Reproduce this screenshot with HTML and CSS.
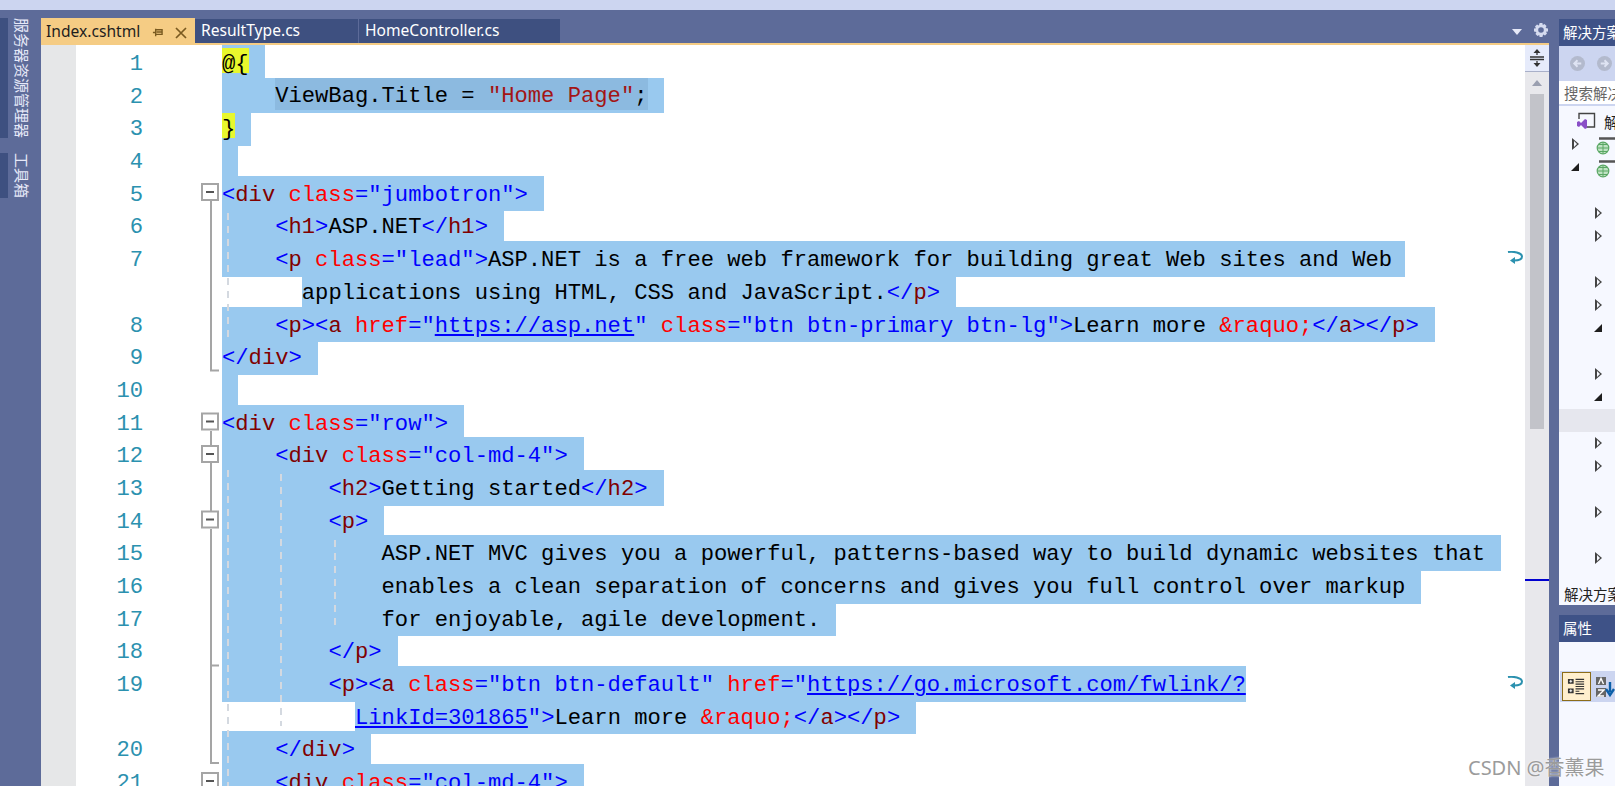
FILE: index.html
```html
<!DOCTYPE html>
<html lang="zh">
<head>
<meta charset="utf-8">
<title>Index.cshtml</title>
<link rel="stylesheet" href="styles.css">
</head>
<body>
<div class="topbar"></div>
<div class="main">
  <aside class="rail">
    <div class="railtab tall">服务器资源管理器</div>
    <div class="railtab">工具箱</div>
  </aside>
  <section class="center">
    <div class="tabstrip">
      <div class="tab active">
        <span class="tabname">Index.cshtml</span>
        <svg class="pin" viewBox="0 0 12 12"><path d="M1 6H4M4 2V10M4 3H11V8H4M11 5.500H5"/></svg>
        <svg class="close" viewBox="0 0 12 12"><path d="M1 1L11 11M11 1L1 11"/></svg>
      </div>
      <div class="tab t1">ResultType.cs</div>
      <div class="tab t2">HomeController.cs</div>
      <div class="stripicons">
        <svg class="drop" viewBox="0 0 10 6"><path d="M0 0H10L5 6Z"/></svg>
        <svg class="gear" viewBox="0 0 14 14"><path fill-rule="evenodd" d="M5.600 0H8.400L8.800 2L10.500 1L12.500 3L11.600 4.900L14 5.600V8.400L12 8.800L13 10.500L11 12.500L9.100 11.600L8.400 14H5.600L5.200 12L3.500 13L1.500 11L2.400 9.100L0 8.400V5.600L2 5.200L1 3.500L3 1.500L4.900 2.400ZM7 4.200A2.800 2.800 0 1 0 7 9.800A2.800 2.800 0 1 0 7 4.200Z"/></svg>
      </div>
    </div>
    <div class="editor">
      <div class="pane">
        <div class="glyphs"></div>
        <div class="lines">
          <div class="row"><span class="n">1</span><span class="code"><span class="y">@{</span></span></div>
          <div class="row"><span class="n">2</span><span class="code ext">    <span class="cs">ViewBag.Title = <span class="s">"Home Page"</span>;</span></span></div>
          <div class="row"><span class="n">3</span><span class="code ext"><span class="y">}</span></span></div>
          <div class="row"><span class="n">4</span><span class="code"></span></div>
          <div class="row"><span class="n">5</span><span class="code ext"><b>&lt;</b><i>div</i> <u>class</u><b>="jumbotron"&gt;</b></span></div>
          <div class="row"><span class="n">6</span><span class="code">    <b>&lt;</b><i>h1</i><b>&gt;</b>ASP.NET<b>&lt;/</b><i>h1</i><b>&gt;</b></span></div>
          <div class="row"><span class="n">7</span><span class="code ext nopad">    <b>&lt;</b><i>p</i> <u>class</u><b>="lead"&gt;</b>ASP.NET is a free web framework for building great Web sites and Web </span><svg class="wrapg" viewBox="0 0 16 14"><path class="wl" d="M1 1C6 0 15 2 15 5.500C15 9 11 9.500 7 9.500"/><path class="wh" d="M8 6L3 9.500L8 13Z"/></svg></div>
          <div class="row"><span class="n"></span><span class="code in6">applications using HTML, CSS and JavaScript.<b>&lt;/</b><i>p</i><b>&gt;</b></span></div>
          <div class="row"><span class="n">8</span><span class="code ext">    <b>&lt;</b><i>p</i><b>&gt;&lt;</b><i>a</i> <u>href</u><b>="<a class="link">https://asp.net</a>"</b> <u>class</u><b>="btn btn-primary btn-lg"&gt;</b>Learn more <u class="ent">&amp;raquo;</u><b>&lt;/</b><i>a</i><b>&gt;&lt;/</b><i>p</i><b>&gt;</b></span></div>
          <div class="row"><span class="n">9</span><span class="code ext"><b>&lt;/</b><i>div</i><b>&gt;</b></span></div>
          <div class="row"><span class="n">10</span><span class="code"></span></div>
          <div class="row"><span class="n">11</span><span class="code"><b>&lt;</b><i>div</i> <u>class</u><b>="row"&gt;</b></span></div>
          <div class="row"><span class="n">12</span><span class="code">    <b>&lt;</b><i>div</i> <u>class</u><b>="col-md-4"&gt;</b></span></div>
          <div class="row"><span class="n">13</span><span class="code ext">        <b>&lt;</b><i>h2</i><b>&gt;</b>Getting started<b>&lt;/</b><i>h2</i><b>&gt;</b></span></div>
          <div class="row"><span class="n">14</span><span class="code">        <b>&lt;</b><i>p</i><b>&gt;</b></span></div>
          <div class="row"><span class="n">15</span><span class="code ext">            ASP.NET MVC gives you a powerful, patterns-based way to build dynamic websites that</span></div>
          <div class="row"><span class="n">16</span><span class="code ext">            enables a clean separation of concerns and gives you full control over markup</span></div>
          <div class="row"><span class="n">17</span><span class="code ext">            for enjoyable, agile development.</span></div>
          <div class="row"><span class="n">18</span><span class="code">        <b>&lt;/</b><i>p</i><b>&gt;</b></span></div>
          <div class="row"><span class="n">19</span><span class="code ext nopad">        <b>&lt;</b><i>p</i><b>&gt;&lt;</b><i>a</i> <u>class</u><b>="btn btn-default"</b> <u>href</u><b>="<a class="link">https://go.microsoft.com/fwlink/?</a></b></span><svg class="wrapg" viewBox="0 0 16 14"><path class="wl" d="M1 1C6 0 15 2 15 5.500C15 9 11 9.500 7 9.500"/><path class="wh" d="M8 6L3 9.500L8 13Z"/></svg></div>
          <div class="row"><span class="n"></span><span class="code ext in10"><b><a class="link">LinkId=301865</a>"&gt;</b>Learn more <u class="ent">&amp;raquo;</u><b>&lt;/</b><i>a</i><b>&gt;&lt;/</b><i>p</i><b>&gt;</b></span></div>
          <div class="row"><span class="n">20</span><span class="code">    <b>&lt;/</b><i>div</i><b>&gt;</b></span></div>
          <div class="row"><span class="n">21</span><span class="code">    <b>&lt;</b><i>div</i> <u>class</u><b>="col-md-4"&gt;</b></span></div>
        </div>
        <svg class="margin" viewBox="190 45 160 741">
          <path class="guide" d="M228 213V340M228 470V786M281 474V726M335 540V630"/>
          <path class="fold" d="M211 200V370.500H219M211 431V445M211 463V511M211 529V763H219M211 665.500H219"/>
          <g class="box"><rect x="202" y="184" width="16" height="16"/><rect x="202" y="413.500" width="16" height="16"/><rect x="202" y="446" width="16" height="16"/><rect x="202" y="511.500" width="16" height="16"/><rect x="202" y="773" width="16" height="16"/></g>
          <path class="minus" d="M206 192H214M206 421.500H214M206 454H214M206 519.500H214M206 781H214"/>
        </svg>
      </div>
      <div class="scroll">
        <div class="split"><svg viewBox="0 0 16 18"><path class="sl" d="M1 8H15M1 10.500H15"/><path class="sa" d="M8 0L11.500 4H4.500ZM8 18L11.500 14H4.500Z"/><path class="sl thin" d="M8 3V6M8 12V15"/></svg></div>
        <div class="uparrow"></div>
        <div class="thumb"></div>
        <div class="caret"></div>
      </div>
    </div>
  </section>
  <div class="gap"></div>
  <aside class="right">
    <div class="phead sol">解决方案资源管理器</div>
    <div class="navbar">
      <svg viewBox="0 0 16 16"><circle cx="8" cy="8" r="8"/><path d="M12 8H5M8 4.500L4.500 8L8 11.500"/></svg>
      <svg viewBox="0 0 16 16"><circle cx="8" cy="8" r="8"/><path d="M4 8H11M8 4.500L11.500 8L8 11.500"/></svg>
    </div>
    <div class="search">搜索解决方案资源管理器</div>
    <div class="tree">
      <div class="node d1"><svg class="ic" viewBox="0 0 20 18"><path class="win" d="M3 7V1.500H18.500V15H11"/><path class="vs" d="M1 10L3 9L5 11L9 7L11 8V16L9 17L5 13L3 15L1 14Z"/></svg><span class="lbl">解决方案</span></div>
      <div class="node d0"><span class="ex open"></span><svg class="ic globe" viewBox="0 0 20 18"><path class="bar" d="M3 1.500H20"/><circle class="gl" cx="7" cy="11" r="5.800"/><path class="gll" d="M1.500 11H12.500M7 5.500V16.500M3 7.500H11M3 14.500H11"/></svg></div>
      <div class="node d0"><span class="ex filled"></span><svg class="ic globe" viewBox="0 0 20 18"><path class="bar" d="M3 1.500H20"/><circle class="gl" cx="7" cy="11" r="5.800"/><path class="gll" d="M1.500 11H12.500M7 5.500V16.500M3 7.500H11M3 14.500H11"/></svg></div>
      <div class="node"></div>
      <div class="node"><span class="ex open in"></span></div>
      <div class="node"><span class="ex open in"></span></div>
      <div class="node"></div>
      <div class="node"><span class="ex open in"></span></div>
      <div class="node"><span class="ex open in"></span></div>
      <div class="node"><span class="ex filled in"></span></div>
      <div class="node"></div>
      <div class="node"><span class="ex open in"></span></div>
      <div class="node"><span class="ex filled in"></span></div>
      <div class="node sel"></div>
      <div class="node"><span class="ex open in"></span></div>
      <div class="node"><span class="ex open in"></span></div>
      <div class="node"></div>
      <div class="node"><span class="ex open in"></span></div>
      <div class="node"></div>
      <div class="node"><span class="ex open in"></span></div>
    </div>
    <div class="bottomtab">解决方案资源管理器</div>
    <div class="rgap"></div>
    <div class="phead prop">属性</div>
    <div class="propbody">
      <div class="proptools">
        <div class="pbtn on"><svg viewBox="0 0 20 20"><path class="pb" d="M1 2H7V7H1ZM1 12H7V17H1Z"/><path class="pw" d="M2.500 4.500H5.500M4 3V6M2.500 14.500H5.500M4 13V16"/><path class="pl" d="M9 2.500H18M9 5H18M9 7.500H18M9 10H18M9 12.500H18M9 15H13M9 17.500H18"/></svg></div>
        <div class="pbtn az"><svg viewBox="0 0 20 22"><path class="azb" d="M1 1H11V9H1ZM1 12H11V21H1Z"/><path class="azw" d="M3.500 8L6 2.500L8.500 8M3 14H9L3 20H9"/><path class="azd" d="M15 6V16M11 13L15 19L19 13"/></svg></div>
      </div>
    </div>
  </aside>
</div>
<div class="watermark">CSDN @香薰果</div>
</body>
</html>
```
FILE: styles.css
```css
* { box-sizing: border-box; }
html, body { margin: 0; height: 100%; overflow: hidden; }
body { width: 1615px; height: 786px; background: #5d6b99; font-family: "Noto Sans", "Noto Sans CJK SC", sans-serif; position: relative; }

.topbar { height: 10px; background: #ccd5f0; }
.main { display: flex; height: 776px; }

/* left rail */
.rail { width: 41px; flex: none; padding-top: 8px; display: flex; flex-direction: column; gap: 15px; }
.railtab { width: 30px; height: 45px; border-left: 8px solid #3e5080; padding-left: 6px; writing-mode: vertical-rl; text-orientation: sideways; font: 15px/16px "Noto Sans CJK SC", sans-serif; color: #e6e8f8; white-space: nowrap; }
.railtab.tall { height: 120px; }

/* centre */
.center { width: 1508px; flex: none; display: flex; flex-direction: column; }
.tabstrip { height: 35px; flex: none; padding-top: 8px; display: flex; align-items: stretch; border-bottom: 2px solid #f5cc84; }
.tab { font-size: 15.600px; line-height: 22px; color: #fff; background: #3e5080; white-space: nowrap; }
.tab.active { width: 154px; margin-bottom: -2px; padding: 2px 0 0 5px; background: #f5cc84; color: #1e1e1e; display: flex; align-items: flex-start; }
.tabname { width: 106px; flex: none; }
.pin { width: 11px; height: 11px; flex: none; margin-top: 7px; fill: none; stroke: #7a5a20; stroke-width: 1.500; }
.close { width: 12px; height: 12px; flex: none; margin: 7px 0 0 12px; fill: none; stroke: #7a5a20; stroke-width: 1.700; }
.t1 { width: 163px; padding-left: 6px; margin-top: 1px; }
.t2 { width: 201px; padding-left: 6px; margin: 1px 0 0 1px; }
.stripicons { margin-left: auto; display: flex; align-items: center; padding: 0 1px 2px 0; }
.drop { width: 10px; height: 6px; fill: #e6e9f8; margin-top: 4px; }
.gear { width: 14px; height: 14px; margin-left: 12px; fill: #d5dbef; }

.editor { flex: 1; display: flex; min-height: 0; background: #fff; }
.pane { width: 1484px; flex: none; display: flex; position: relative; overflow: hidden; }
.glyphs { width: 35px; flex: none; background: #e6e7e8; }
.lines { flex: 1; min-width: 0; }
.row { height: 32.7px; display: flex; position: relative; font: 22.17px/39.7px "Liberation Mono", monospace; white-space: pre; color: #000; }
.n { width: 67px; flex: none; text-align: right; color: #2b91af; }
.code { display: block; margin-left: 79px; height: 32.7px; padding-right: 16px; background: #99c9ef; }
.code.ext { height: 35.7px; }
.code.nopad { padding-right: 0; }
.code.in6 { margin-left: 158.800px; }
.code.in10 { margin-left: 212px; }
.code b { font-weight: 400; color: #0000ff; }
.code i { font-style: normal; color: #800000; }
.code u { text-decoration: none; color: #ff0000; }
.code .link { color: #0000ff; text-decoration: underline; }
.code .s { color: #a31515; }
.y { display: inline-block; vertical-align: top; height: 25px; margin-top: 3px; line-height: 33.700px; background: #e8f72d; }
.cs { display: inline-block; vertical-align: top; height: 32px; line-height: 37px; background: #8cbae0; }
.wrapg { position: absolute; right: 2px; top: 10px; width: 16px; height: 14px; }
.wl { fill: none; stroke: #2b91af; stroke-width: 2; }
.wh { fill: #2b91af; }

.margin { position: absolute; left: 149px; top: 0; width: 160px; height: 741px; }
.guide { fill: none; stroke: #d4d9e0; stroke-width: 2; stroke-dasharray: 7 6; }
.fold { fill: none; stroke: #a5a5a5; stroke-width: 2; }
.box rect { fill: #fff; stroke: #a5a5a5; stroke-width: 2; }
.minus { fill: none; stroke: #555; stroke-width: 2; }

.scroll { width: 24px; flex: none; background: #e8e8ec; position: relative; display: flex; flex-direction: column; align-items: center; }
.split { width: 24px; height: 27px; background: #e6ebfb; border-bottom: 1px solid #a9b0c9; display: flex; align-items: center; justify-content: center; }
.split svg { width: 16px; height: 18px; }
.sl { fill: none; stroke: #333; stroke-width: 1.300; }
.sa { fill: #333; }
.uparrow { width: 0; height: 0; margin-top: 8px; border-left: 5.500px solid transparent; border-right: 5.500px solid transparent; border-bottom: 6px solid #9a9fb0; }
.thumb { width: 14px; height: 335px; margin-top: 8px; background: #c2c3c9; }
.caret { position: absolute; left: 0; right: 0; top: 534px; height: 2px; background: #0000d0; }

.gap { width: 10px; flex: none; }

/* right panels */
.right { width: 56px; flex: none; display: flex; flex-direction: column; overflow: hidden; white-space: nowrap; padding-top: 9px; }
.phead { height: 27px; flex: none; background: #3e5287; color: #fff; padding-left: 4px; font: 14.500px/26px "Noto Sans CJK SC", sans-serif; overflow: hidden; }
.navbar { height: 34px; flex: none; background: #ccd5f0; display: flex; align-items: center; gap: 12px; padding-left: 11px; }
.navbar svg { width: 15px; height: 15px; flex: none; }
.navbar circle { fill: #b3bacd; }
.navbar path { fill: none; stroke: #dfe4f3; stroke-width: 2; }
.search { height: 26px; flex: none; background: #fff; border-bottom: 2px solid #ccd5f0; border-top: 1px solid #ccd5f0; padding-left: 5px; color: #666; font: 14.500px/23px "Noto Sans CJK SC", sans-serif; overflow: hidden; }
.tree { height: 481px; flex: none; background: #f6f8ff; padding-top: 3.500px; overflow: hidden; }
.node { height: 23px; position: relative; display: flex; align-items: center; }
.node.sel { background: #e6e7ee; }
.ex { display: block; flex: none; margin-left: 13px; }
.ex.in { margin-left: 36px; }
.ex.open { width: 0; height: 0; border-left: 7px solid #444; border-top: 6px solid transparent; border-bottom: 6px solid transparent; position: relative; }
.ex.open::after { content: ""; position: absolute; left: -5.500px; top: -3px; border-left: 3.500px solid #f6f8ff; border-top: 3px solid transparent; border-bottom: 3px solid transparent; }
.ex.filled { width: 0; height: 0; margin-left: 12px; border-left: 8px solid transparent; border-bottom: 8px solid #1e1e1e; }
.ex.filled.in { margin-left: 35px; }
.ic { width: 20px; height: 18px; flex: none; }
.d1 { padding-left: 17px; }
.lbl { margin-left: 8px; font: 15px/23px "Noto Sans CJK SC", sans-serif; color: #1e1e1e; }
.win { fill: none; stroke: #444; stroke-width: 1.400; }
.vs { fill: #8a4fc7; }
.globe { margin: 3px 0 0 17px; }
.bar { stroke: #555; stroke-width: 2.500; fill: none; }
.gl { fill: #bfe3c3; stroke: #5aa764; stroke-width: 1.200; }
.gll { fill: none; stroke: #5aa764; stroke-width: 1; }
.bottomtab { height: 18px; flex: none; background: #f6f8ff; padding-left: 5px; color: #222; font: 14.500px/14px "Noto Sans CJK SC", sans-serif; overflow: hidden; }
.rgap { height: 10px; flex: none; }
.prop { padding-left: 4px; }
.propbody { flex: 1; background: #f6f8ff; padding: 29px 0 0 1px; }
.proptools { height: 31px; background: #ccd5f0; display: flex; align-items: center; padding-left: 2px; gap: 4px; }
.pbtn { height: 29px; flex: none; display: flex; align-items: center; justify-content: center; }
.pbtn.on { width: 29px; background: #ffefce; border: 1px solid #8c6d1a; }
.pbtn.on svg { width: 19px; height: 19px; }
.pbtn.az svg { width: 20px; height: 22px; display: block; }
.pb { fill: #333; }
.pw { fill: none; stroke: #fff; stroke-width: 1; }
.pl { fill: none; stroke: #333; stroke-width: 1.200; }
.azb { fill: #666; }
.azw { fill: none; stroke: #fff; stroke-width: 1.400; }
.azd { fill: none; stroke: #0c5fa8; stroke-width: 2.400; }

.watermark { position: absolute; left: 1468px; top: 755px; font: 20px/26px "Noto Sans", "Noto Sans CJK SC", sans-serif; color: #9b9b9b; text-shadow: 0 0 2px #fff; white-space: nowrap; }
```
